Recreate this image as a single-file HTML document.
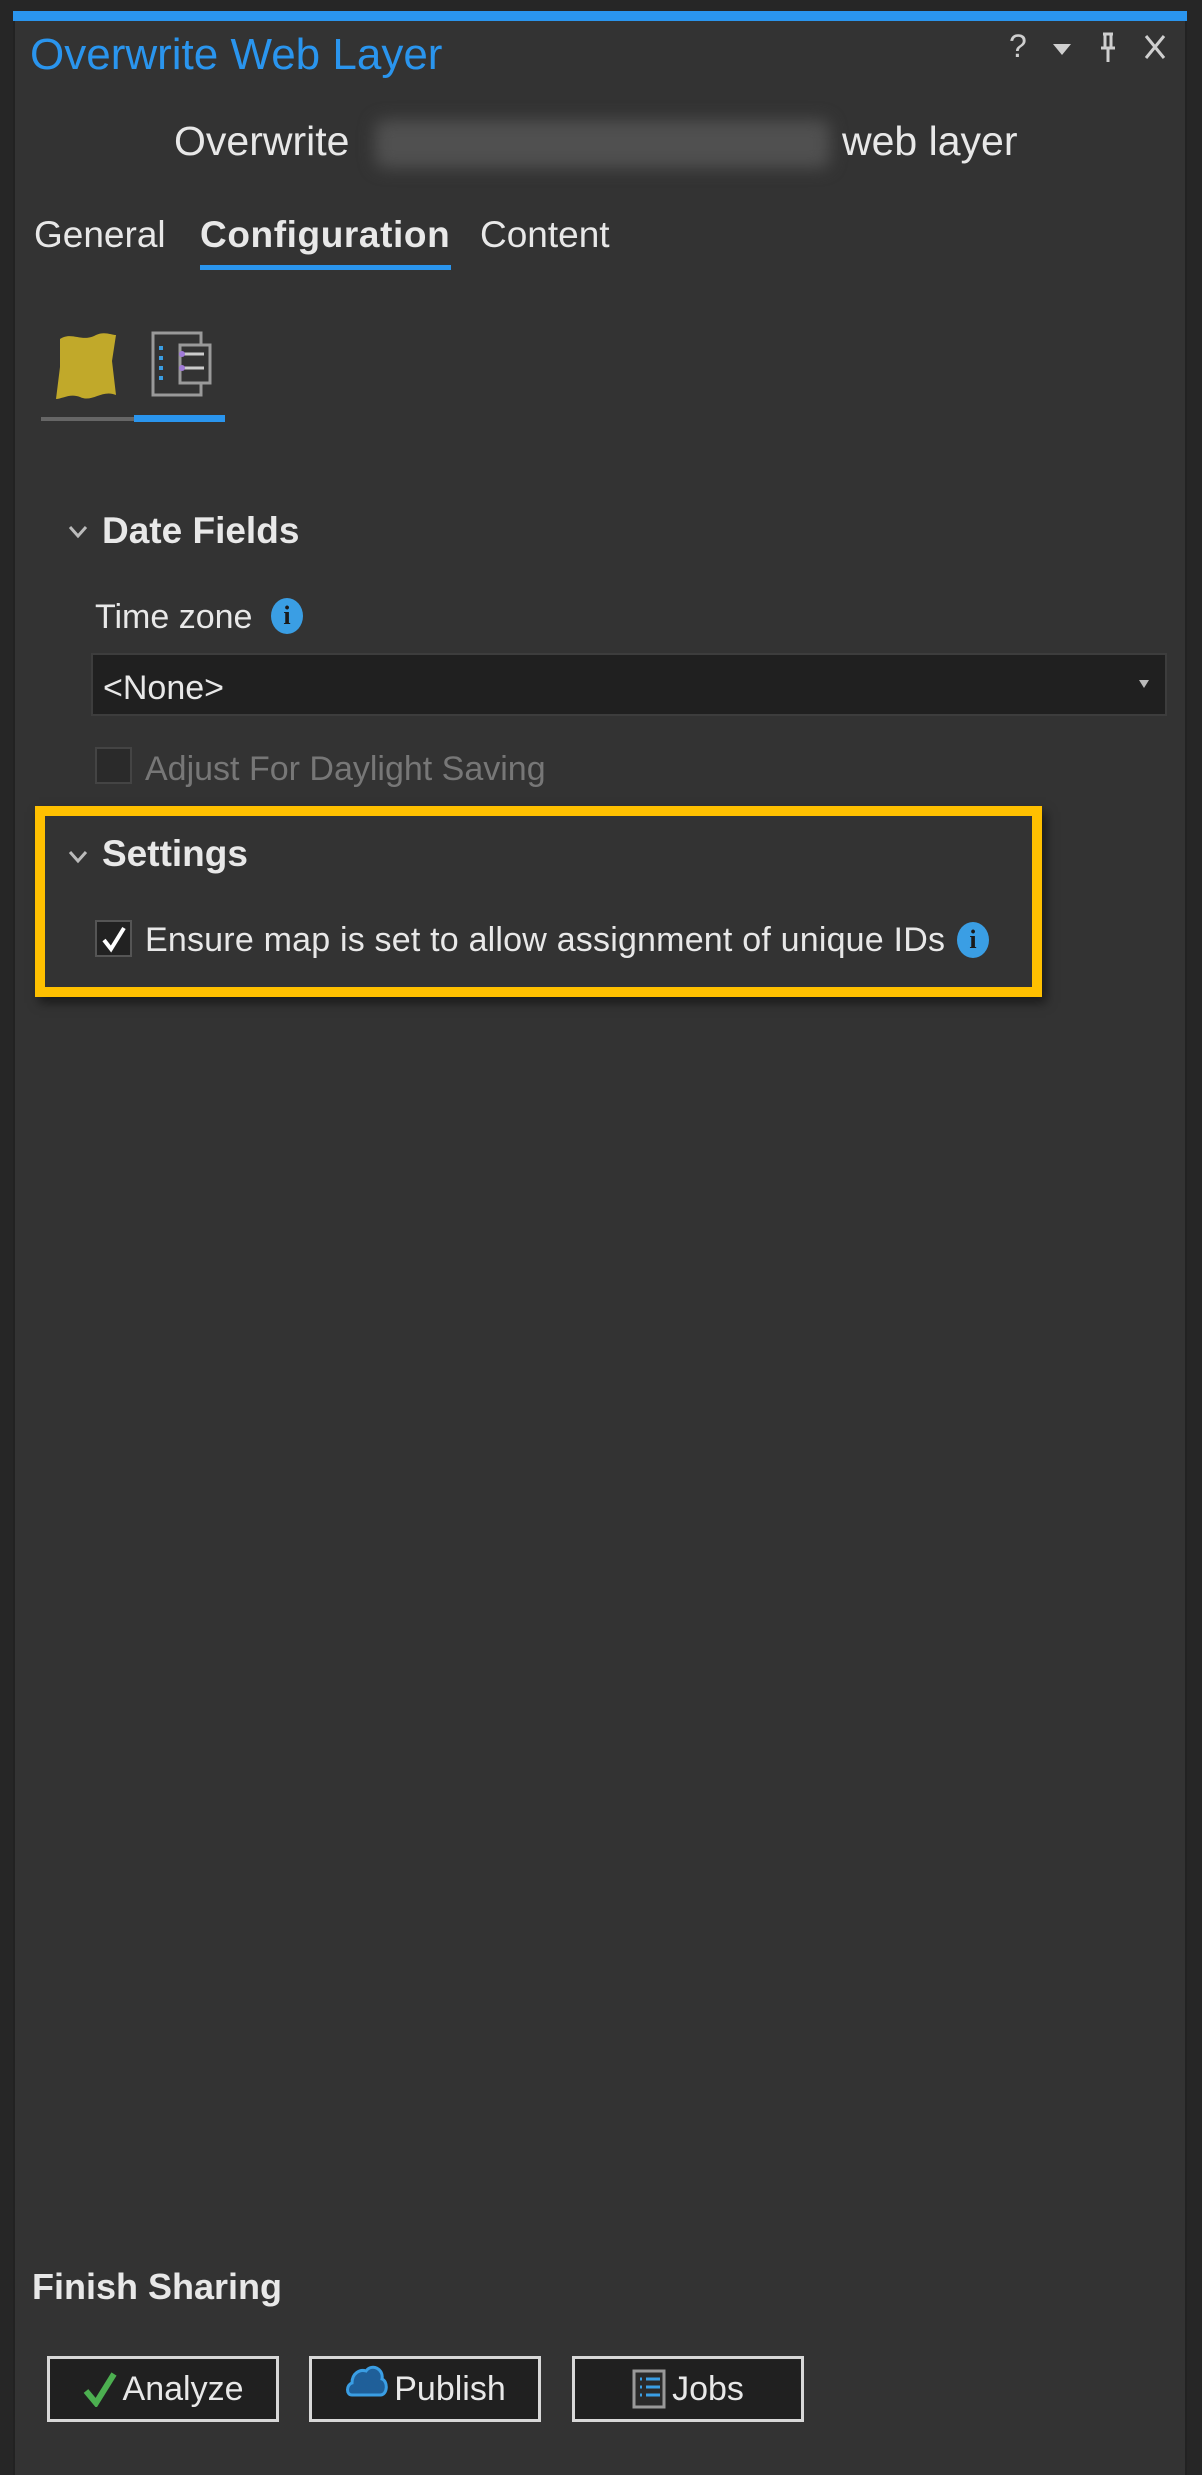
<!DOCTYPE html>
<html><head><meta charset="utf-8"><style>
*{margin:0;padding:0;box-sizing:border-box}
html,body{width:1202px;height:2475px;background:#262626;overflow:hidden;font-family:"Liberation Sans",sans-serif;color:#e8e8e8}
.panel{position:absolute;left:13px;top:11px;width:1174px;height:2464px;background:#333333;border-left:2px solid #222;border-right:2px solid #222}
.bar{position:absolute;left:13px;top:11px;width:1174px;height:10px;background:#2a95ee}
.abs{position:absolute;white-space:nowrap}
.t{font-size:34px}
.hdr{font-size:36px;font-weight:bold}
.info{position:absolute;width:32px;height:36px;border-radius:50%;background:#3a9ee4;color:#1a1a1a;font-weight:bold;font-size:26px;text-align:center;line-height:36px;font-family:"Liberation Serif",serif}
.btn{position:absolute;top:2356px;height:66px;width:232px;background:#202020;border:3px solid #d8d8d8;font-size:34px;display:flex;align-items:center;justify-content:center;gap:6px}
</style></head><body>
<div class="panel"></div>
<div class="bar"></div>
<div class="abs" style="left:30px;top:30px;font-size:44px;color:#2a95ee">Overwrite Web Layer</div>
<div class="abs" style="left:1009px;top:28px;font-size:32px;color:#cfcfcf">?</div>
<svg class="abs" style="left:1053px;top:44px" width="18" height="12"><path d="M0 0H18L9 11Z" fill="#cfcfcf"/></svg>
<svg class="abs" style="left:1098px;top:32px" width="20" height="32"><path d="M5 2H15M7 2V16H13V2M3 16H17M10 16V30" stroke="#cfcfcf" stroke-width="3" fill="none"/></svg>
<svg class="abs" style="left:1143px;top:34px" width="24" height="26"><path d="M3 2L21 24M21 2L3 24" stroke="#cfcfcf" stroke-width="3"/></svg>
<div class="abs" style="left:174px;top:118px;font-size:41px">Overwrite</div>
<div class="abs" style="left:375px;top:120px;width:455px;height:48px;background:#505050;filter:blur(8px);border-radius:10px"></div>
<div class="abs" style="left:842px;top:118px;font-size:41px">web layer</div>
<div class="abs" style="left:34px;top:214px;font-size:37px">General</div>
<div class="abs" style="left:200px;top:214px;font-size:37px;font-weight:bold;letter-spacing:0.6px">Configuration</div>
<div class="abs" style="left:480px;top:214px;font-size:37px">Content</div>
<div class="abs" style="left:200px;top:265px;width:251px;height:5px;background:#2a95ee"></div>
<svg class="abs" style="left:52px;top:331px" width="68" height="70"><path d="M8 8C20 0 30 12 44 4C52 0 60 4 64 4L60 30L64 64C50 58 40 72 28 66C18 62 10 68 4 68L8 36Z" fill="#c1a92a"/></svg>
<svg class="abs" style="left:150px;top:330px" width="66" height="70"><rect x="3" y="3" width="48" height="62" fill="none" stroke="#9a9a9a" stroke-width="3"/><rect x="30" y="15" width="30" height="38" fill="#333" stroke="#9a9a9a" stroke-width="3"/><path d="M11 16v4M11 26v4M11 36v4M11 46v4" stroke="#3a9ee4" stroke-width="4"/><path d="M34 24h20M34 38h20" stroke="#ccc" stroke-width="3"/><circle cx="32" cy="24" r="3" fill="#a07ad8"/><circle cx="32" cy="38" r="3" fill="#a07ad8"/></svg>
<div class="abs" style="left:41px;top:417px;width:93px;height:4px;background:#666"></div>
<div class="abs" style="left:134px;top:415px;width:91px;height:7px;background:#2a95ee"></div>
<svg class="abs" style="left:68px;top:525px" width="20" height="14"><path d="M2 2L10 11L18 2" stroke="#bbb" stroke-width="3" fill="none"/></svg>
<div class="abs hdr" style="left:102px;top:510px;font-size:37px">Date Fields</div>
<div class="abs t" style="left:95px;top:598px">Time zone</div>
<div class="info" style="left:271px;top:598px">i</div>
<div class="abs" style="left:91px;top:653px;width:1076px;height:63px;background:#202020;border:2px solid #3d3d3d"></div>
<div class="abs t" style="left:103px;top:669px">&lt;None&gt;</div>
<svg class="abs" style="left:1139px;top:680px" width="10" height="8"><path d="M0 0H10L5 8Z" fill="#bbb"/></svg>
<div class="abs" style="left:95px;top:747px;width:37px;height:37px;border:2px solid #444;background:#2a2a2a"></div>
<div class="abs t" style="left:145px;top:750px;color:#777">Adjust For Daylight Saving</div>
<div class="abs" style="left:35px;top:806px;width:1007px;height:191px;border:10px solid #ffc000;box-shadow:4px 6px 10px rgba(0,0,0,.5)"></div>
<svg class="abs" style="left:68px;top:850px" width="20" height="14"><path d="M2 2L10 11L18 2" stroke="#bbb" stroke-width="3" fill="none"/></svg>
<div class="abs hdr" style="left:102px;top:833px;font-size:37px">Settings</div>
<div class="abs" style="left:95px;top:920px;width:37px;height:37px;border:2px solid #555;background:#222"></div>
<svg class="abs" style="left:99px;top:924px" width="30" height="30"><path d="M5 16L12 25L25 4" stroke="#fff" stroke-width="4" fill="none"/></svg>
<div class="abs t" style="left:145px;top:921px;letter-spacing:0.2px">Ensure map is set to allow assignment of unique IDs</div>
<div class="info" style="left:957px;top:922px">i</div>
<div class="abs" style="left:32px;top:2266px;font-size:36px;font-weight:bold">Finish Sharing</div>
<div class="btn" style="left:47px"><svg width="34" height="36"><path d="M3 20L13 32L31 3" stroke="#4caf50" stroke-width="6" fill="none"/></svg>Analyze</div>
<div class="btn" style="left:309px"><svg width="44" height="40" style="margin-top:-16px"><path d="M8 34C2 34 2 24 8 22C8 12 16 8 22 10C28 2 40 8 38 18C44 20 44 34 36 34Z" fill="#1f5f99" stroke="#3a9ee4" stroke-width="3"/></svg>Publish</div>
<div class="btn" style="left:572px"><svg width="34" height="40"><rect x="2" y="2" width="30" height="36" fill="#2a2a2a" stroke="#999" stroke-width="3"/><path d="M8 10h2M8 18h2M8 26h2M14 10h14M14 18h14M14 26h14" stroke="#3a9ee4" stroke-width="3"/></svg>Jobs</div>
</body></html>
